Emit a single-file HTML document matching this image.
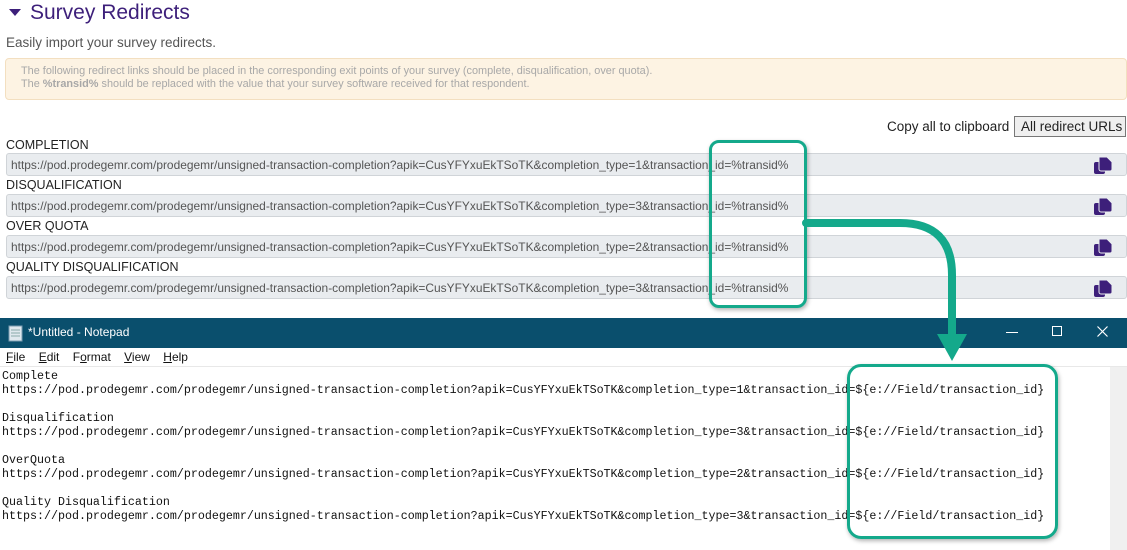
<!DOCTYPE html>
<html><head><style>
*{margin:0;padding:0;box-sizing:border-box}
body{width:1127px;height:550px;overflow:hidden;background:#fff;font-family:"Liberation Sans",sans-serif;position:relative}
.a{position:absolute}
.lbl{position:absolute;left:6px;font-size:12.5px;color:#222}
.fld{position:absolute;left:6px;width:1121px;height:23px;background:#e9ecef;border:1px solid #d0d4d8;border-radius:3px;font-size:11.95px;color:#555;padding:4px 0 0 4px;white-space:nowrap}
.cp{position:absolute;right:13px;top:2px}
.np{position:absolute;left:2px;font-family:"Liberation Mono",monospace;font-size:11.67px;color:#111;white-space:pre;line-height:14px}
.menu span{margin-right:10px}
.menu u{text-decoration:underline}
</style></head><body>
<div class="a" style="left:9px;top:9px;width:0;height:0;border-left:6px solid transparent;border-right:6px solid transparent;border-top:7px solid #3d1f7a"></div>
<div class="a" style="left:30px;top:1px;font-size:21px;color:#3d1f7a">Survey Redirects</div>
<div class="a" style="left:6px;top:35px;font-size:13.5px;color:#555">Easily import your survey redirects.</div>
<div class="a" style="left:5px;top:58px;width:1122px;height:42px;background:#fdf3e3;border:1px solid #f3dfc0;border-radius:4px;font-size:10.9px;color:#a8a8a8;padding:6px 0 0 15px;line-height:13px">The following redirect links should be placed in the corresponding exit points of your survey (complete, disqualification, over quota).<br>The <b>%transid%</b> should be replaced with the value that your survey software received for that respondent.</div>
<div class="a" style="left:887px;top:119px;font-size:13.5px;color:#222">Copy all to clipboard</div>
<div class="a" style="left:1014px;top:116px;width:112px;height:21px;background:#efefef;border:1px solid #777;font-size:13.5px;color:#222;padding:2px 0 0 6px">All redirect URLs</div>

<div class="lbl" style="top:138px">COMPLETION</div>
<div class="fld" style="top:153px">https://pod.prodegemr.com/prodegemr/unsigned-transaction-completion?apik=CusYFYxuEkTSoTK&amp;completion_type=1&amp;transaction_id=%transid%<svg class="cp" width="20" height="18" viewBox="0 0 20 18"><rect x="1" y="6" width="11" height="12" rx="2" fill="#3d1f7a"/><path d="M6 1h8l5 5v7a2 2 0 0 1-2 2H8a2 2 0 0 1-2-2z" fill="#3d1f7a" stroke="#e9ecef" stroke-width="1"/></svg></div>
<div class="lbl" style="top:178px">DISQUALIFICATION</div>
<div class="fld" style="top:194px">https://pod.prodegemr.com/prodegemr/unsigned-transaction-completion?apik=CusYFYxuEkTSoTK&amp;completion_type=3&amp;transaction_id=%transid%<svg class="cp" width="20" height="18" viewBox="0 0 20 18"><rect x="1" y="6" width="11" height="12" rx="2" fill="#3d1f7a"/><path d="M6 1h8l5 5v7a2 2 0 0 1-2 2H8a2 2 0 0 1-2-2z" fill="#3d1f7a" stroke="#e9ecef" stroke-width="1"/></svg></div>
<div class="lbl" style="top:219px">OVER QUOTA</div>
<div class="fld" style="top:235px">https://pod.prodegemr.com/prodegemr/unsigned-transaction-completion?apik=CusYFYxuEkTSoTK&amp;completion_type=2&amp;transaction_id=%transid%<svg class="cp" width="20" height="18" viewBox="0 0 20 18"><rect x="1" y="6" width="11" height="12" rx="2" fill="#3d1f7a"/><path d="M6 1h8l5 5v7a2 2 0 0 1-2 2H8a2 2 0 0 1-2-2z" fill="#3d1f7a" stroke="#e9ecef" stroke-width="1"/></svg></div>
<div class="lbl" style="top:260px">QUALITY DISQUALIFICATION</div>
<div class="fld" style="top:276px">https://pod.prodegemr.com/prodegemr/unsigned-transaction-completion?apik=CusYFYxuEkTSoTK&amp;completion_type=3&amp;transaction_id=%transid%<svg class="cp" width="20" height="18" viewBox="0 0 20 18"><rect x="1" y="6" width="11" height="12" rx="2" fill="#3d1f7a"/><path d="M6 1h8l5 5v7a2 2 0 0 1-2 2H8a2 2 0 0 1-2-2z" fill="#3d1f7a" stroke="#e9ecef" stroke-width="1"/></svg></div>

<div class="a" style="left:0;top:318px;width:1127px;height:30px;background:#0a4f6d"></div>
<svg class="a" style="left:8px;top:324px" width="16" height="18"><rect x="1" y="2" width="13" height="15" fill="#dfe8ee" stroke="#7a9bb0"/><line x1="3" y1="6" x2="12" y2="6" stroke="#8aa"/><line x1="3" y1="9" x2="12" y2="9" stroke="#8aa"/><line x1="3" y1="12" x2="12" y2="12" stroke="#8aa"/></svg>
<div class="a" style="left:28px;top:325px;font-size:12px;color:#fff">*Untitled - Notepad</div>
<div class="a" style="left:1006px;top:332px;width:12px;height:1px;background:#fff"></div>
<div class="a" style="left:1052px;top:326px;width:10px;height:10px;border:1px solid #fff"></div>
<svg class="a" style="left:1097px;top:326px" width="11" height="11"><path d="M0.5 0.5L10.5 10.5M10.5 0.5L0.5 10.5" stroke="#fff" stroke-width="1.2"/></svg>
<div class="a menu" style="left:6px;top:350px;font-size:12px;color:#111"><span><u>F</u>ile</span> <span><u>E</u>dit</span> <span>F<u>o</u>rmat</span> <span><u>V</u>iew</span> <span><u>H</u>elp</span></div>
<div class="a" style="left:0;top:366px;width:1127px;height:1px;background:#e8e8e8"></div>
<div class="a" style="left:1110px;top:367px;width:17px;height:183px;background:#f0f0f0"></div>
<div class="np" style="top:369px">Complete
https://pod.prodegemr.com/prodegemr/unsigned-transaction-completion?apik=CusYFYxuEkTSoTK&amp;completion_type=1&amp;transaction_id=${e://Field/transaction_id}

Disqualification
https://pod.prodegemr.com/prodegemr/unsigned-transaction-completion?apik=CusYFYxuEkTSoTK&amp;completion_type=3&amp;transaction_id=${e://Field/transaction_id}

OverQuota
https://pod.prodegemr.com/prodegemr/unsigned-transaction-completion?apik=CusYFYxuEkTSoTK&amp;completion_type=2&amp;transaction_id=${e://Field/transaction_id}

Quality Disqualification
https://pod.prodegemr.com/prodegemr/unsigned-transaction-completion?apik=CusYFYxuEkTSoTK&amp;completion_type=3&amp;transaction_id=${e://Field/transaction_id}</div>

<div class="a" style="left:709px;top:140px;width:98px;height:168px;border:3px solid #14a98b;border-radius:10px;box-shadow:1px 2px 4px rgba(0,0,0,.3)"></div>
<div class="a" style="left:847px;top:364px;width:211px;height:175px;border:3px solid #14a98b;border-radius:14px;box-shadow:1px 2px 4px rgba(0,0,0,.3)"></div>
<svg class="a" style="left:0;top:0" width="1127" height="550"><path d="M806 223 H900 Q952 223 952 275 V336" fill="none" stroke="#14a98b" stroke-width="8" stroke-linecap="round"/><polygon points="937,334 967,334 952,361" fill="#14a98b"/></svg>
</body></html>
